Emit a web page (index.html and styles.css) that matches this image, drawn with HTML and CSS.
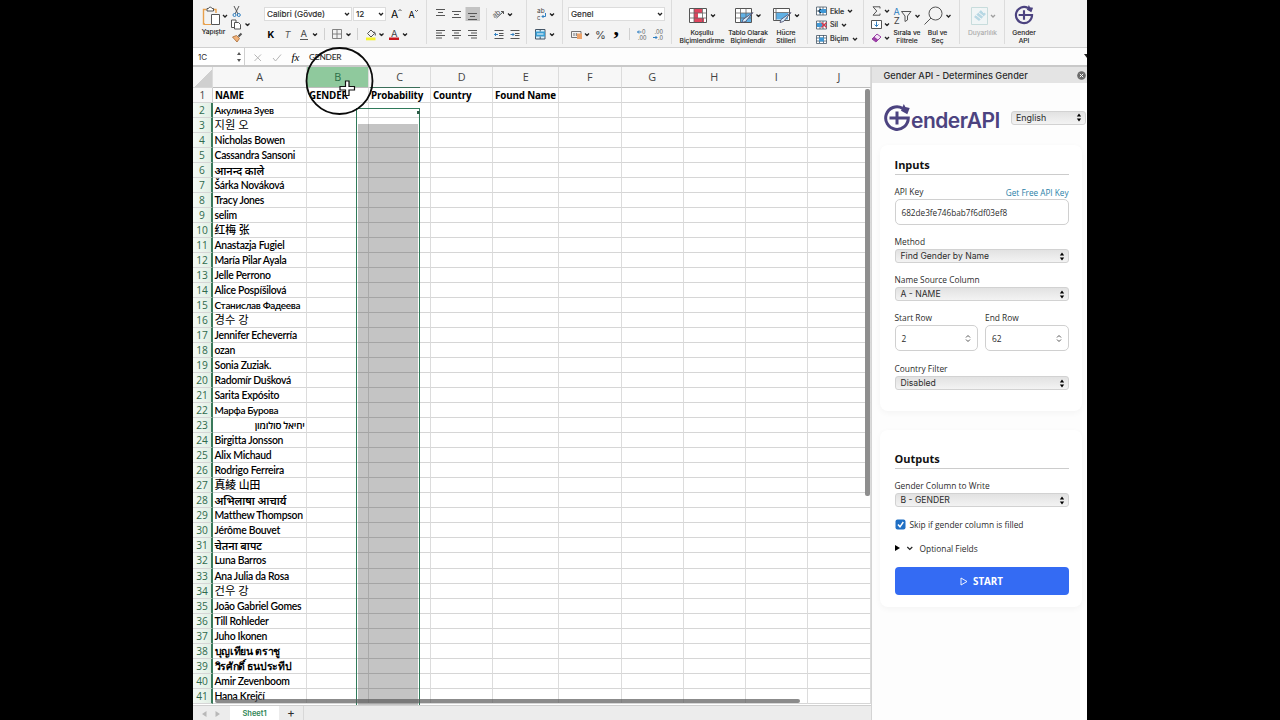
FILE: index.html
```html
<!DOCTYPE html>
<html lang="tr">
<head>
  <meta charset="UTF-8">
  <title>Sheet1</title>
  <link rel="stylesheet" href="styles.css">
</head>
<body>
  <svg class="defs" width="0" height="0">
    <symbol id="chev" viewBox="0 0 6 4"><path d="M1 1l2 2 2-2" fill="none" stroke="#222" stroke-width="1.3"/></symbol>
    <symbol id="updown" viewBox="0 0 6 10"><path d="M3 0.6L5.4 4H0.6zM3 9.4L0.6 6h4.8z"/></symbol>
    <symbol id="gmark" viewBox="0 0 28 28">
      <g fill="none" stroke="#4c4380" stroke-width="3">
        <path d="M19.5 4.2A11.3 11.3 0 1 0 25.3 14H6.5M14 7.5v13"/>
      </g>
      <path d="M18 6.8L20.8 0l1.6 3 4.3 1-2.4 6.2z" fill="#4c4380"/>
    </symbol>
  </svg>

  <div class="app">
    <div class="ribbon">
      <div class="group clipboard">
        <div class="big paste">
          <svg width="34" height="22" viewBox="197 5 34 22">
            <path d="M205 24h-1.500V9.500h3M213 9.500h3V13" fill="none" stroke="#e8a04c" stroke-width="1.400"/>
            <path d="M207 11V8.500h1.500a1.800 1.800 0 0 1 3.500 0h1.500V11z" fill="#fff" stroke="#555"/>
            <path d="M211.500 14.500h8v10h-8z" fill="#fff" stroke="#555"/>
            <path d="M204 24.500h7" stroke="#e8a04c"/>
            <use href="#chev" x="222" y="14" width="6" height="4"/>
          </svg>
          <span>Yapıştır</span>
        </div>
        <svg width="22" height="40" viewBox="230 5 22 40">
          <path d="M234 6l4 8M239 6l-4 8" stroke="#555" fill="none"/>
          <circle cx="234.500" cy="15" r="1.500" fill="none" stroke="#2f7fc1"/><circle cx="238.800" cy="15" r="1.500" fill="none" stroke="#2f7fc1"/>
          <path d="M234 27.500h-2.500v-7.500h4.500v2M234.500 22.500h4l2 2v4.500h-6z" fill="#fff" stroke="#555"/>
          <use href="#chev" x="244.500" y="22.500" width="6" height="4"/>
          <path d="M241.500 33.500l-3 3" stroke="#555" stroke-width="2"/>
          <path d="M232.500 37l4-1.500 3 3-2.500 3.500z" fill="#f2b279" stroke="#a66a35" stroke-width=".8"/>
        </svg>
      </div>

      <div class="group font">
        <div class="row">
          <div class="combo family">Calibri (Gövde)<svg width="6" height="4"><use href="#chev"/></svg></div>
          <div class="combo size">12<svg width="6" height="4"><use href="#chev"/></svg></div>
          <svg class="resize" width="32" height="14" viewBox="390 7 32 14">
            <text x="391" y="17.500" font-size="10.500">A</text><path d="M398.500 11l1.500-1.500 1.500 1.500" class="ln"/>
            <text x="408.500" y="17.500" font-size="9">A</text><path d="M415 10l1.500 1.500 1.500-1.500" class="ln"/>
          </svg>
        </div>
        <svg width="160" height="18" viewBox="264 25 160 18">
          <text x="267.500" y="37.500" font-size="9.500" font-weight="700">K</text>
          <text x="284.500" y="37.500" font-size="9.500" font-style="italic" fill="#555">T</text>
          <text x="300.500" y="37" font-size="9.500" fill="#444">A</text><path d="M300 39.500h8" class="ln"/>
          <use href="#chev" x="312" y="32.500" width="6" height="4"/>
          <path d="M324.500 28v12M357.500 28v12" stroke="#d0d0d0"/>
          <path d="M332.500 29.500h9v9h-9zM337 29.500v9M332.500 34h9" fill="none" stroke="#777" stroke-width=".9"/>
          <use href="#chev" x="345.500" y="32.500" width="6" height="4"/>
          <path d="M367.500 33.500l3.500-3.500 3.500 3.500-3.500 3.500zM374 31.500q2 2 1.300 4" class="ln"/>
          <path d="M366 37.500h9.500v2.800H366z" fill="#f5f32a"/>
          <use href="#chev" x="378.500" y="32.500" width="6" height="4"/>
          <text x="391" y="36.500" font-size="9.500" fill="#444">A</text>
          <path d="M389 37.500h10v2.500h-10z" fill="#c8141c"/>
          <use href="#chev" x="402" y="32.500" width="6" height="4"/>
        </svg>
      </div>

      <div class="group align">
        <svg width="98" height="38" viewBox="429 5 98 38">
          <path d="M465.500 7h14.500v14h-14.500z" fill="#c3c3c3"/>
          <path d="M436 9.500h9M438 12.500h5M436 15.500h9M452 11.500h9M454 14.500h5M452 17.500h9M468 13.500h9M470 16.500h5M468 19.500h9" class="ln"/>
          <path d="M436 30.500h9M436 33h6M436 35.500h9M436 38h6M452 30.500h9M454 33h5M452 35.500h9M454 38h5M468 30.500h9M471 33h6M468 35.500h9M471 38h6" class="ln"/>
          <text x="493" y="16" font-size="7" fill="#555" transform="rotate(-38 497 15)">ab</text>
          <path d="M496.500 18l7-6.500M501 11.500h2.500v2.500" class="ln"/>
          <use href="#chev" x="507" y="12.500" width="6" height="4"/>
          <path d="M486.500 8v32" stroke="#dedede"/>
          <path d="M494.500 30.500h9M499 33.500h4.500M499 35.500h4.500M494.500 38.500h9M510.500 30.500h9M515 33.500h4.500M515 35.500h4.500M510.500 38.500h9" class="ln"/>
          <path d="M498 34.500h-3.500M496 33l-1.500 1.500 1.500 1.500M510.500 34.500h3.500M512.500 33l1.500 1.500-1.500 1.500" fill="none" stroke="#2f7fc1"/>
        </svg>
      </div>

      <div class="group wrap">
        <svg width="30" height="38" viewBox="530 5 30 38">
          <text x="537" y="13" font-size="6.500" fill="#444">ab</text><text x="537" y="20" font-size="6" fill="#444">c</text>
          <path d="M545.500 13v3.500h-3.500M543.500 15l-1.500 1.500 1.500 1.500" fill="none" stroke="#2f7fc1"/>
          <use href="#chev" x="549" y="12.500" width="6" height="4"/>
          <path d="M535.500 29.500h9.500v9.500h-9.500z" fill="#d9effa" stroke="#456"/>
          <path d="M535.500 31.500h9.500v5h-9.500z" fill="#3a9fd4"/><path d="M537 34h6.500" stroke="#fff"/>
          <path d="M540.200 29.500v2M540.200 36.500v2.500" stroke="#456"/>
          <use href="#chev" x="549" y="32.500" width="6" height="4"/>
        </svg>
      </div>

      <div class="group number">
        <div class="row"><div class="combo format">Genel<svg width="6" height="4"><use href="#chev"/></svg></div></div>
        <svg width="98" height="18" viewBox="568 25 98 18">
          <path d="M571.500 31.500h9.500v6h-9.500zM574 33v3M576.300 33v3" fill="none" stroke="#666" stroke-width=".9"/>
          <path d="M577 33.500h5v5.500h-5z" fill="#eda36a"/>
          <use href="#chev" x="584" y="32.500" width="6" height="4"/>
          <text x="595" y="38.500" font-size="11" fill="#444">%</text>
          <text x="613.500" y="34.500" font-size="22" font-weight="700" class="serif">,</text>
          <path d="M629.500 28v12" stroke="#d0d0d0"/>
          <text x="642" y="34" font-size="5.500" fill="#555">0</text><text x="638" y="39.500" font-size="5.500" fill="#555">.00</text>
          <text x="654.500" y="34" font-size="5.500" fill="#555">.00</text><text x="658" y="39.500" font-size="5.500" fill="#555">.0</text>
          <path d="M641.500 32h-4M639 30.500l-1.500 1.500 1.500 1.500M653 37.500h4M655.500 36l1.500 1.500-1.500 1.500" fill="none" stroke="#2f7fc1"/>
        </svg>
      </div>

      <div class="group styles">
        <div class="big cond">
          <svg width="30" height="18" viewBox="688 7 30 18">
            <path d="M690.500 8.500h17v14h-17z" fill="#fff" stroke="#555"/>
            <path d="M695 9h8v4h-8zM695 13h4v5h-4zM695 18h10v4h-10z" fill="#e0455e"/>
            <path d="M690.500 13h17M690.500 18h17M695 8.500v14M703.500 8.500v14" fill="none" stroke="#666" stroke-width=".8"/>
            <use href="#chev" x="711" y="7" width="6" height="17"/>
          </svg>
          <span>Koşullu<br>Biçimlendirme</span>
        </div>
        <div class="big tbl">
          <svg width="30" height="18" viewBox="734 7 30 18">
            <path d="M736.500 8.500h16v14h-16z" fill="#fff" stroke="#555"/>
            <path d="M741 13h11v9h-11z" fill="#5fb0e5"/>
            <path d="M736.500 13h16M736.500 18h16M741.500 8.500v14M747 8.500v14" fill="none" stroke="#666" stroke-width=".8"/>
            <path d="M754 12.500l-7.500 9-3.500 1 1-3z" fill="#d9eefb" stroke="#446" stroke-width=".8"/>
            <use href="#chev" x="756.500" y="13.500" width="6" height="4"/>
          </svg>
          <span>Tablo Olarak<br>Biçimlendir</span>
        </div>
        <div class="big cellstyle">
          <svg width="30" height="18" viewBox="771 7 30 18">
            <path d="M773.500 8.500h16v12h-16z" fill="#fff" stroke="#555"/>
            <path d="M776 12.500h12v7h-12z" fill="#5fb0e5"/>
            <path d="M773.500 12.500h16M776 8.500v12" fill="none" stroke="#666" stroke-width=".8"/>
            <path d="M791 12.500l-7.500 9-3.500 1 1-3z" fill="#d9eefb" stroke="#446" stroke-width=".8"/>
            <use href="#chev" x="794" y="13.500" width="6" height="4"/>
          </svg>
          <span>Hücre<br>Stilleri</span>
        </div>
      </div>

      <div class="group cells">
        <div class="mini">
          <svg width="11" height="10"><path d="M.5 1h10v8H.5zM.5 5h10M4 1v8M7 1v8" fill="#fff" stroke="#456" stroke-width=".8"/><path d="M3 3h7v4H3z" fill="#3f98d6"/><path d="M5 3L2.500 5 5 7" fill="none" stroke="#123"/></svg>
          Ekle<svg width="6" height="4"><use href="#chev"/></svg>
        </div>
        <div class="mini">
          <svg width="11" height="10"><path d="M.5 1h10v8H.5zM.5 5h10M4 1v8M7 1v8" fill="#fff" stroke="#456" stroke-width=".8"/><path d="M1 3h5v4H1z" fill="#3f98d6"/><path d="M5.500 2.500l5 5M10.500 2.500l-5 5" fill="none" stroke="#d8354c" stroke-width="1.200"/></svg>
          Sil<svg width="6" height="4"><use href="#chev"/></svg>
        </div>
        <div class="mini">
          <svg width="11" height="10"><path d="M.5 1.500h10v8H.5zM.5 4h10M.5 7h10M3.500 1v8M7.500 1v8" fill="#fff" stroke="#456" stroke-width=".8"/><path d="M3 3.500h5v4H3z" fill="#3f98d6"/></svg>
          Biçim<svg width="6" height="4"><use href="#chev"/></svg>
        </div>
      </div>

      <div class="group edit">
        <svg width="22" height="40" viewBox="870 5 22 40">
          <path d="M880 8.500v-1.700h-7l3.800 4.200-3.800 4.200h7v-1.700" class="ln"/>
          <use href="#chev" x="884" y="9" width="6" height="4"/>
          <path d="M871.500 20.500h10v8h-10z" fill="#fff" stroke="#555"/><path d="M876.500 21.500v5M874.500 24.500l2 2 2-2" fill="none" stroke="#2f7fc1"/>
          <use href="#chev" x="884" y="22.500" width="6" height="4"/>
          <path d="M872 39l5-5 4 3-5 5z" fill="#f3e3f5" stroke="#9a3fa5"/><path d="M872 39l2.200-2.200 4 3-2.200 2.200z" fill="#9a3fa5"/>
          <use href="#chev" x="884" y="36" width="6" height="4"/>
        </svg>
        <div class="big sort">
          <svg width="30" height="22" viewBox="893 5 30 22">
            <text x="894.500" y="15" font-size="9" fill="#2f7fc1">A</text><text x="894.800" y="24" font-size="9.500" fill="#444">Z</text>
            <path d="M902.500 11.500h9.500l-3.500 4.500v4l-2.500 1.500V16z" class="ln"/>
            <use href="#chev" x="915.500" y="14" width="6" height="4"/>
          </svg>
          <span>Sırala ve<br>Filtrele</span>
        </div>
        <div class="big find">
          <svg width="30" height="22" viewBox="924 5 30 22">
            <circle cx="936.500" cy="13.500" r="6.500" class="ln"/><path d="M932 18l-6.500 6.500" class="ln"/>
            <use href="#chev" x="946.500" y="14" width="6" height="4"/>
          </svg>
          <span>Bul ve<br>Seç</span>
        </div>
      </div>

      <div class="group sens">
        <div class="big">
          <svg width="28" height="22" viewBox="969 5 28 22" opacity=".4">
            <path d="M971.500 7.500h16v17h-16z" fill="#eef8fb" stroke="#8bb"/>
            <path d="M974 17l7-7 5 4-7 7z" fill="#5fb0cf"/><path d="M976 15l5 4M978.500 12.500l5 4M980 8l4 5" stroke="#fff"/>
            <use href="#chev" x="990" y="14" width="6" height="4"/>
          </svg>
          <span>Duyarlılık</span>
        </div>
      </div>

      <div class="group gender">
        <div class="big">
          <svg width="20" height="20"><use href="#gmark"/></svg>
          <span>Gender<br>API</span>
        </div>
      </div>
    </div>

    <div class="formula">
      <div class="namebox">1C<svg width="6" height="12"><path d="M3 1L5 4H1zM3 11L1 8h4z" fill="#555"/></svg></div>
      <svg width="54" height="14" viewBox="250 49 54 14">
        <path d="M254.500 53.500l6.500 6.500M261 53.500l-6.500 6.500M273 57l2.500 3 5.500-6.500" fill="none" stroke="#b5b5b5"/>
        <text x="291.500" y="59.500" font-size="11" font-style="italic" class="serif">fx</text>
      </svg>
      <span class="value">GENDER</span>
      <svg class="expand" width="6" height="5"><path d="M0 0h6L3 4z" fill="#222"/></svg>
    </div>

    <div class="main">
      <div class="book">
        <div class="sheet">
          <div class="grid" id="grid"></div>
          <div class="selection"></div>
          <div class="moving"></div>
          <div class="scroll-y"></div>
          <div class="scroll-x"></div>
        </div>
        <div class="tabs">
          <svg width="37" height="14"><path d="M13.500 5v6l-4.500-3zM22.500 5v6l4.500-3z" fill="#b8b8b8"/></svg>
          <div class="tab">Sheet1</div>
          <div class="add">+</div>
        </div>
      </div>

      <div class="pane">
        <div class="pane-title">
          <span>Gender API - Determines Gender</span>
          <svg width="9" height="9"><circle cx="4.500" cy="4.500" r="4.300" fill="#6a6a6a"/><path d="M2.800 2.800l3.400 3.400M6.200 2.800L2.800 6.200" stroke="#fff"/></svg>
        </div>
        <div class="brand">
          <svg width="28" height="28"><use href="#gmark"/></svg>
          <span class="name">enderAPI</span>
          <div class="select lang">English<svg width="6" height="9"><use href="#updown"/></svg></div>
        </div>

        <div class="card inputs">
          <h3>Inputs</h3>
          <div class="label-row"><label>API Key</label><a>Get Free API Key</a></div>
          <div class="field">682de3fe746bab7f6df03ef8</div>
          <label class="method">Method</label>
          <div class="select">Find Gender by Name<svg width="6" height="9"><use href="#updown"/></svg></div>
          <label>Name Source Column</label>
          <div class="select">A - NAME<svg width="6" height="9"><use href="#updown"/></svg></div>
          <div class="pair">
            <div><label>Start Row</label><div class="field">2<svg width="6" height="9" viewBox="0 0 6 9"><path d="M1 3.500l2-2 2 2M1 5.500l2 2 2-2" fill="none" stroke="#555"/></svg></div></div>
            <div><label>End Row</label><div class="field">62<svg width="6" height="9" viewBox="0 0 6 9"><path d="M1 3.500l2-2 2 2M1 5.500l2 2 2-2" fill="none" stroke="#555"/></svg></div></div>
          </div>
          <label class="country">Country Filter</label>
          <div class="select">Disabled<svg width="6" height="9"><use href="#updown"/></svg></div>
        </div>

        <div class="card outputs">
          <h3>Outputs</h3>
          <label>Gender Column to Write</label>
          <div class="select">B - GENDER<svg width="6" height="9"><use href="#updown"/></svg></div>
          <div class="check">
            <svg width="11" height="11"><rect x=".5" y=".5" width="10" height="10" rx="2" fill="#1f6fc4"/><path d="M3 5.500l2 2.300L8.300 3" fill="none" stroke="#fff" stroke-width="1.500"/></svg>
            Skip if gender column is filled
          </div>
          <div class="optional">
            <svg width="19" height="8"><path d="M0 1v6l5-3z"/><path d="M12.300 3l2.500 2.500L17.300 3" fill="none" stroke="#222" stroke-width="1.200"/></svg>
            Optional Fields
          </div>
          <div class="start">
            <svg width="8" height="9"><path d="M1 1v7l6-3.500z" fill="none" stroke="#fff" stroke-width=".9"/></svg>
            START
          </div>
        </div>
      </div>
    </div>

    <!-- click ring and cell cursor -->
    <svg class="pointer" width="70" height="70" viewBox="305 46 70 70">
      <circle cx="339.500" cy="81" r="33" fill="none" stroke="#0a0a0a" stroke-width="1.800"/>
      <path d="M345.500 81h3.500v5.500h5.500v3.500H349v5.500h-3.500V90H340v-3.500h5.500z" fill="#fff" stroke="#111" stroke-width="1.200"/>
    </svg>
  </div>

  <script>
    const cols = ["A", "B", "C", "D", "E", "F", "G", "H", "I", "J"];
    const heads = ["NAME", "GENDER", "Probability", "Country", "Found Name", "", "", "", "", ""];
    const names = [
      "Акулина Зуев", "지원 오", "Nicholas Bowen", "Cassandra Sansoni", "आनन्द काले",
      "Šárka Nováková", "Tracy Jones", "selim", "红梅 张", "Anastazja Fugiel",
      "María Pilar Ayala", "Jelle Perrono", "Alice Pospíšilová", "Станислав Фадеева", "경수 강",
      "Jennifer Echeverría", "ozan", "Sonia Zuziak.", "Radomír Dušková", "Sarita Expósito",
      "Марфа Бурова", "יחיאל סולומון", "Birgitta Jonsson", "Alix Michaud", "Rodrigo Ferreira",
      "真綾 山田", "अभिलाषा आचार्य", "Matthew Thompson", "Jérôme Bouvet", "चेतना बापट",
      "Luna Barros", "Ana Julia da Rosa", "건우 강", "João Gabriel Gomes", "Till Rohleder",
      "Juho Ikonen", "บุญเทียน ตราชู", "วิรศักดิ์ ธนประทีป", "Amir Zevenboom", "Hana Krejčí"
    ];

    function script(name) {
      if (/[\uac00-\ud7af]/.test(name)) return " cjk";
      if (/[\u4e00-\u9fff]/.test(name)) return " cjk han";
      if (/[\u0900-\u097f]/.test(name)) return " deva";
      if (/[\u0400-\u04ff]/.test(name)) return " cyr";
      if (/[\u0590-\u05ff]/.test(name)) return " hebr";
      return "";
    }

    let html = `<div class="corner"></div>`;
    html += cols.map(c => `<div class="col${c === "B" ? " active" : ""}">${c}</div>`).join('');
    html += `<div class="num first">1</div>`;
    html += heads.map(h => `<div class="cell head">${h}</div>`).join('');
    names.forEach((name, i) => {
      html += `<div class="num">${i + 2}</div><div class="cell${script(name)}" dir="auto">${name}</div>`;
      html += `<div class="cell"></div>`.repeat(cols.length - 1);
    });
    document.getElementById("grid").innerHTML = html;
  </script>
</body>
</html>
```
FILE: styles.css
```css
* {
  box-sizing: border-box;
}
body {
  margin: 0;
  background: #000;
  color: #2c2c2c;
  font-family: "Open Sans", "Noto Sans", sans-serif;
  overflow: hidden;
}
svg {
  display: block;
  flex: none;
}
svg text {
  font-family: Inter, "Liberation Sans", sans-serif;
}
svg .serif {
  font-family: "Liberation Serif", serif;
}
.defs {
  position: absolute;
}
.ln {
  fill: none;
  stroke: #555;
  stroke-width: 1;
}
.app {
  position: relative;
  width: 894px;
  height: 720px;
  margin: 0 auto;
  background: #fff;
  overflow: hidden;
  display: flex;
  flex-direction: column;
}

/* ribbon */
.ribbon {
  height: 48px;
  flex: none;
  display: flex;
  background: #f3f3f3;
  border-bottom: 1px solid #d0d0d0;
  font-family: Inter, "Liberation Sans", sans-serif;
}
.group {
  position: relative;
  flex: none;
  height: 44px;
  padding-top: 5px;
  border-right: 1px solid #dcdcdc;
}
.clipboard {
  width: 66px;
  display: flex;
  padding-left: 4px;
  border: 0;
}
.big {
  display: flex;
  flex-direction: column;
  align-items: center;
  font-size: 6.7px;
  line-height: 8px;
  text-align: center;
  white-space: nowrap;
  color: #222;
  -webkit-text-stroke: 0.15px #222;
}
.paste {
  width: 33px;
}
.paste span {
  margin-top: 1px;
}
.font {
  width: 168px;
  padding: 7px 0 0 5px;
}
.row {
  display: flex;
  height: 14px;
  margin-bottom: 4px;
}
.combo {
  display: flex;
  align-items: center;
  justify-content: space-between;
  height: 14px;
  padding: 0 1px 0 2px;
  background: #fff;
  border: 1px solid #dcdcdc;
  font-size: 8.2px;
  white-space: nowrap;
  -webkit-text-stroke: 0.15px #222;
}
.family {
  width: 88px;
  margin-right: 1px;
}
.size {
  width: 33px;
  margin-right: 4px;
}
.align {
  width: 100px;
  padding-left: 2px;
}
.wrap {
  width: 36px;
  padding-left: 3px;
}
.number {
  width: 109px;
  padding: 7px 0 0 5px;
}
.format {
  width: 97px;
}
.styles {
  width: 136px;
  display: flex;
  padding-top: 7px;
}
.styles .big span {
  margin-top: 3.5px;
}
.cond {
  width: 46px;
  margin-left: 7px;
}
.tbl {
  width: 44px;
  margin-left: 1px;
}
.cellstyle {
  width: 32px;
}
.cells {
  width: 56px;
  display: flex;
  flex-direction: column;
  gap: 3.8px;
  padding: 6px 0 0 8px;
}
.mini {
  display: flex;
  align-items: center;
  gap: 3px;
  height: 10px;
  font-size: 7.2px;
  -webkit-text-stroke: 0.2px #222;
}
.edit {
  width: 96px;
  display: flex;
  padding-left: 6px;
}
.sort {
  width: 30px;
}
.find {
  width: 31px;
}
.sens {
  width: 45px;
  padding-left: 1px;
}
.sens .big {
  color: #aaa;
  -webkit-text-stroke: 0.1px #aaa;
}
.edit .big span,
.sens .big span {
  margin-top: 1.5px;
}
.gender {
  width: 38px;
  border: 0;
}
.gender .big span {
  margin-top: 3.5px;
}

/* formula bar */
.formula {
  height: 19px;
  flex: none;
  display: flex;
  align-items: center;
  border-bottom: 2px solid #c9c9c9;
  background: #fdfdfd;
  font-family: Inter, "Liberation Sans", sans-serif;
  font-size: 8px;
}
.namebox {
  width: 52px;
  height: 100%;
  padding: 0 2px 0 5px;
  margin-right: 5px;
  display: flex;
  align-items: center;
  justify-content: space-between;
  background: #fff;
  border-right: 1px solid #cfcfcf;
}
.value {
  margin-left: 5px;
  font-family: Lato, sans-serif;
  font-size: 8.4px;
  font-weight: 500;
  letter-spacing: -0.25px;
}
.expand {
  margin-left: auto;
  margin-right: -3px;
}

/* sheet */
.main {
  flex: 1;
  display: flex;
  min-height: 0;
}
.book {
  width: 678px;
  display: flex;
  flex-direction: column;
}
.sheet {
  position: relative;
  height: 638px;
  overflow: hidden;
}
.grid {
  display: grid;
  grid-template-columns: 20px 94px 62px 62px 62px 66px 62.5px 62px 62px 62px 63.5px;
  grid-template-rows: 21px repeat(42, 15.02px);
  font-family: Lato, "Open Sans", "Noto Sans", sans-serif;
  font-weight: 600;
  font-size: 10.4px;
  letter-spacing: -0.27px;
  color: #000;
}
.grid > div {
  border-right: 1px solid #dcdcdc;
  border-bottom: 1px solid #d6d6d6;
  white-space: nowrap;
  line-height: 15.5px;
  padding: 0 1.5px;
  min-width: 0;
}
.grid > .cjk {
  font-family: Lato, "Noto Sans CJK KR", sans-serif;
  font-weight: 400;
  font-size: 11.3px;
  letter-spacing: 0;
  line-height: 13px;
}
.grid > .han {
  font-family: Lato, "Noto Sans CJK SC", sans-serif;
  font-weight: 500;
  font-size: 10.8px;
}
.grid > .deva {
  font-size: 10.8px;
  letter-spacing: 0;
}
.grid > .cyr {
  font-size: 10px;
  letter-spacing: -0.3px;
}
.grid > .hebr {
  font-size: 9.8px;
}
.grid > .head {
  font-family: "Open Sans", sans-serif;
  font-weight: 700;
  font-size: 9.8px;
  letter-spacing: -0.15px;
  padding-left: 2px;
}
.grid > .corner {
  background: linear-gradient(135deg, #f6f6f6 55%, #cfcfcf 56%);
}
.grid > .col {
  background: #f7f7f7;
  border-bottom-color: #bdbdbd;
  font-family: "Open Sans", sans-serif;
  font-size: 10.8px;
  font-weight: 400;
  line-height: 20px;
  text-align: center;
  color: #444;
}
.grid > .col.active {
  background: #8fc99d;
  color: #2b6e48;
}
.grid > .num {
  padding: 0;
  background: linear-gradient(90deg, #f4faf5, #e2efe5);
  border-right: 2px solid #39785a;
  font-family: "Open Sans", sans-serif;
  font-size: 10.2px;
  font-weight: 400;
  letter-spacing: 0;
  text-align: center;
  color: #2f6a4c;
}
.grid > .num.first {
  background: #f7f7f7;
  border-right: 1px solid #ccc;
  color: #444;
}
.selection {
  position: absolute;
  left: 163px;
  top: 41px;
  width: 64px;
  bottom: 0;
  border: 1px solid #2f7a5a;
  border-bottom: 0;
}
.selection::before {
  content: "";
  position: absolute;
  inset: 15px 1px 0 1px;
  background: rgba(0, 0, 0, 0.23);
}
.selection::after {
  content: "";
  position: absolute;
  right: -1px;
  top: 2px;
  width: 3px;
  height: 3px;
  background: #2f5f4a;
}
/* column header underline of the selected range */
.moving {
  position: absolute;
  left: 177px;
  top: 20px;
  width: 50px;
  height: 1px;
  background: #3b6f5a;
}
.scroll-y {
  position: absolute;
  left: 672px;
  top: 22px;
  width: 5px;
  height: 407px;
  border-radius: 2px;
  background: #8e8e8e;
}
.scroll-x {
  position: absolute;
  left: 22px;
  top: 632px;
  width: 585px;
  height: 4px;
  border-radius: 2px;
  background: rgba(90, 90, 90, 0.7);
}
.tabs {
  height: 15px;
  display: flex;
  background: #ececec;
  border-top: 1px solid #cfcfcf;
  font-family: Inter, sans-serif;
}
.tab {
  width: 49px;
  height: 14px;
  background: #fff;
  text-align: center;
  font-size: 7.5px;
  line-height: 15px;
  font-weight: 600;
  color: #2f8555;
}
.add {
  width: 25px;
  text-align: center;
  font-size: 12px;
  line-height: 14px;
  border-right: 1px solid #d8d8d8;
}

/* task pane */
.pane {
  width: 216px;
  background: #fdfdfd;
  border-left: 1px solid #d4d4d4;
  font-size: 8.4px;
}
.pane-title {
  height: 16px;
  display: flex;
  align-items: center;
  justify-content: space-between;
  padding: 0 1px 0 11.5px;
  background: #e4e4e4;
  font-family: Inter, sans-serif;
  font-size: 9.2px;
  font-weight: 500;
}
.brand {
  height: 62px;
  display: flex;
  align-items: center;
  padding: 7px 0 0 11px;
}
.name {
  width: 100px;
  padding-top: 5px;
  font-family: Inter, sans-serif;
  font-size: 21px;
  font-weight: 600;
  letter-spacing: -0.5px;
  color: #4c4380;
}
.card {
  width: 202px;
  margin-left: 8px;
  padding: 0 13.5px 0 14.5px;
  background: #fff;
  border-radius: 8px;
  box-shadow: 0 2px 6px rgba(0, 0, 0, 0.04);
}
.inputs {
  height: 266px;
}
.outputs {
  height: 177px;
  margin-top: 19px;
}
h3 {
  margin: 0 0 10px;
  padding-top: 12px;
  height: 30px;
  font-size: 11px;
  line-height: 15px;
  font-weight: 700;
  color: #111;
  border-bottom: 1px solid #ccc;
}
.outputs h3 {
  padding-top: 21px;
  height: 39px;
}
label {
  display: block;
  height: 14px;
  line-height: 13px;
}
.label-row {
  display: flex;
  justify-content: space-between;
}
.label-row a {
  color: #2a7fa8;
  line-height: 16px;
  height: 14px;
  font-size: 8.2px;
}
.field {
  height: 26px;
  display: flex;
  align-items: center;
  justify-content: space-between;
  padding: 0 6px;
  border: 1px solid #d0d0d0;
  border-radius: 5px;
  background: #fff;
}
.inputs > .field {
  font-size: 8.2px;
}
.select {
  height: 14px;
  display: flex;
  align-items: center;
  justify-content: space-between;
  padding: 0 3px 0 5px;
  margin-bottom: 10px;
  border: 1px solid #d2d2d2;
  border-radius: 3px;
  background: linear-gradient(#e2e2e2, #f3f3f3);
  font-family: Inter, sans-serif;
  font-size: 8.6px;
}
.lang {
  width: 75px;
  margin: 0;
  padding-left: 4px;
  font-size: 8.9px;
}
.method {
  margin-top: 10px;
}
.pair {
  display: flex;
  gap: 7px;
}
.pair > div {
  flex: 1;
}
.country {
  margin-top: 11px;
}
.check,
.optional {
  display: flex;
  align-items: center;
  height: 14px;
  gap: 4px;
}
.optional {
  margin: 10px 0 12px;
  gap: 6px;
}
.start {
  height: 28px;
  display: flex;
  align-items: center;
  justify-content: center;
  gap: 5px;
  border-radius: 4px;
  background: #346bf3;
  color: #fff;
  font-size: 9.8px;
  font-weight: 700;
}
.pointer {
  position: absolute;
  left: 112px;
  top: 46px;
}
```
